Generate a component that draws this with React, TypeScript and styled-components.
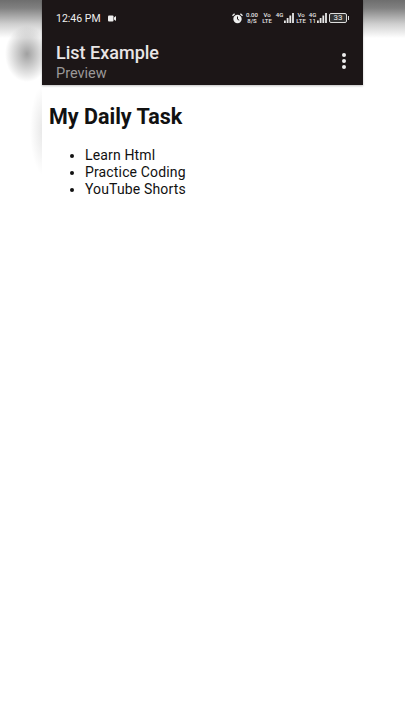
import React from "react";
import styled, { createGlobalStyle } from "styled-components";

const Global = createGlobalStyle`
  html, body { margin: 0; padding: 0; background: #fff; }
  #root { height: 720px; }
`;

const Page = styled.div`
  width: 405px;
  height: 720px;
  overflow: hidden;
  display: flex;
  justify-content: center;
  align-items: flex-start;
  font-family: Roboto, "Liberation Sans", sans-serif;
  background:
    radial-gradient(ellipse 22px 28px at 27px 54px, rgba(120,120,120,.7), rgba(120,120,120,0) 100%),
    radial-gradient(ellipse 14px 45px at 44px 130px, rgba(170,170,170,.3), rgba(170,170,170,0) 100%),
    linear-gradient(to bottom, #6e6e6e 0, #808080 8px, #cfcfcf 24px, #fff 38px);
`;

const Phone = styled.div`
  width: 321px;
  height: 720px;
  background: #fff;
  display: flex;
  flex-direction: column;
`;

const Header = styled.header`
  height: 85px;
  background: #1c1617;
  box-shadow: 0 1px 2px rgba(0,0,0,.25);
  color: #fff;
  display: flex;
  flex-direction: column;
  flex: none;
`;

const StatusBar = styled.div`
  height: 36px;
  padding: 0 14px;
  display: flex;
  align-items: center;
  justify-content: space-between;
`;

const StatusLeft = styled.div`
  display: flex;
  align-items: center;
  gap: 7px;
  font-size: 10.5px;
  color: #eee;
`;

const StatusRight = styled.div`
  display: flex;
  align-items: center;
  color: #e8e8e8;
`;

const TinyStack = styled.div<{ $w: number; $ml: number }>`
  display: flex;
  flex-direction: column;
  align-items: center;
  font-size: 6px;
  font-weight: 500;
  line-height: 6.5px;
  width: ${p => p.$w}px;
  margin-left: ${p => p.$ml}px;
`;

const Battery = styled.div`
  box-sizing: border-box;
  width: 18px;
  height: 10px;
  margin-left: 2px;
  border: 1px solid #ddd;
  border-radius: 2px;
  background: #333;
  font-size: 8px;
  line-height: 8px;
  text-align: center;
  color: #eee;
`;

const BatteryTip = styled.div`
  width: 1px;
  height: 4px;
  margin-left: 1px;
  background: #ddd;
`;

const TitleRow = styled.div`
  flex: 1;
  padding: 0 14px;
  display: flex;
  align-items: flex-start;
  justify-content: space-between;
`;

const Titles = styled.div`
  display: flex;
  flex-direction: column;
  margin-top: 6px;
`;

const Title = styled.div`
  font-size: 18px;
  font-weight: 500;
  line-height: 22px;
  color: #e9e5e5;
`;

const Subtitle = styled.div`
  font-size: 14.5px;
  line-height: 19px;
  color: #9b9898;
`;

const Dots = styled.div`
  display: flex;
  flex-direction: column;
  gap: 2px;
  margin: 17px 3px 0 0;
`;

const Dot = styled.span`
  width: 4px;
  height: 4px;
  border-radius: 50%;
  background: #eee;
`;

const Content = styled.main`
  padding: 19px 7px;
  color: #111;
`;

const Heading = styled.h1`
  margin: 0 0 17px;
  font-size: 21.5px;
  font-weight: 700;
  line-height: 26px;
`;

const List = styled.ul`
  margin: 0;
  padding-left: 36px;
  font-size: 14px;
  letter-spacing: 0.15px;
  line-height: 17px;
`;

const Signal = () => (
  <svg width="10" height="10" viewBox="0 0 10 10" fill="#e8e8e8">
    <rect x="0" y="7.5" width="1.8" height="2.5" />
    <rect x="2.7" y="5" width="1.8" height="5" />
    <rect x="5.4" y="2.5" width="1.8" height="7.5" />
    <rect x="8.1" y="0" width="1.8" height="10" />
  </svg>
);

const Alarm = () => (
  <svg width="11" height="11" viewBox="0 0 11 11" fill="none">
    <circle cx="5.5" cy="6" r="4.2" fill="#eee" />
    <path d="M5.5 3.5V6.2L7.2 7.2" stroke="#1c1617" strokeWidth="1" />
    <path d="M0.5 2.8L2.6 0.8M10.5 2.8L8.4 0.8" stroke="#eee" strokeWidth="1.3" />
  </svg>
);

const Camera = () => (
  <svg width="8" height="7" viewBox="0 0 8 7" fill="#eee">
    <rect x="0" y="0.5" width="5.5" height="6" rx="1" />
    <path d="M6 2.5L8 1V6L6 4.5Z" />
  </svg>
);

export default function App() {
  return (
    <>
      <Global />
      <Page>
        <Phone>
          <Header>
            <StatusBar>
              <StatusLeft>
                <span>12:46 PM</span>
                <Camera />
              </StatusLeft>
              <StatusRight>
                <Alarm />
                <TinyStack $w={14} $ml={2}><span>0.00</span><span>8/S</span></TinyStack>
                <TinyStack $w={10} $ml={3}><span>Vo</span><span>LTE</span></TinyStack>
                <TinyStack $w={9} $ml={3}><span>4G</span><span>&nbsp;</span></TinyStack>
                <Signal />
                <TinyStack $w={10} $ml={2}><span>Vo</span><span>LTE</span></TinyStack>
                <TinyStack $w={9} $ml={2}><span>4G</span><span>11</span></TinyStack>
                <Signal />
                <Battery>33</Battery>
                <BatteryTip />
              </StatusRight>
            </StatusBar>
            <TitleRow>
              <Titles>
                <Title>List Example</Title>
                <Subtitle>Preview</Subtitle>
              </Titles>
              <Dots><Dot /><Dot /><Dot /></Dots>
            </TitleRow>
          </Header>
          <Content>
            <Heading>My Daily Task</Heading>
            <List>
              <li>Learn Html</li>
              <li>Practice Coding</li>
              <li>YouTube Shorts</li>
            </List>
          </Content>
        </Phone>
      </Page>
    </>
  );
}
